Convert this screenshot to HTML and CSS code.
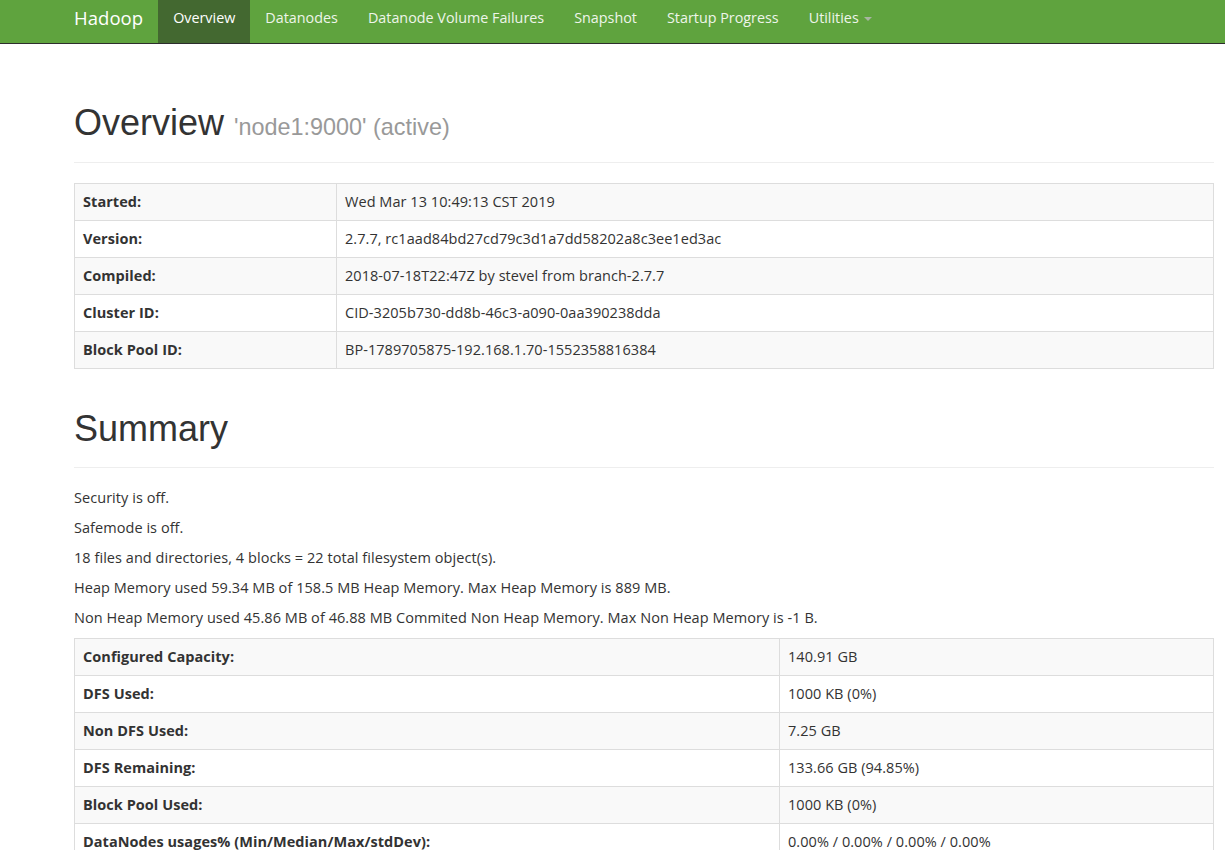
FILE: index.html
```html
<!DOCTYPE html>
<html>
<head>
<meta charset="utf-8">
<title>Namenode information</title>
<link rel="stylesheet" href="styles.css">
</head>
<body>
<header class="navbar">
  <div class="navbar-inner">
    <a class="brand" href="#">Hadoop</a>
    <ul class="nav">
      <li class="active"><a href="#">Overview</a></li>
      <li><a href="#">Datanodes</a></li>
      <li><a href="#">Datanode Volume Failures</a></li>
      <li><a href="#">Snapshot</a></li>
      <li><a href="#">Startup Progress</a></li>
      <li><a href="#">Utilities <span class="caret"></span></a></li>
    </ul>
  </div>
</header>
<main class="container">
  <div class="page-header first">
    <h1>Overview <small>'node1:9000' (active)</small></h1>
  </div>
  <table class="table info">
    <tbody>
      <tr><th>Started:</th><td>Wed Mar 13 10:49:13 CST 2019</td></tr>
      <tr><th>Version:</th><td>2.7.7, rc1aad84bd27cd79c3d1a7dd58202a8c3ee1ed3ac</td></tr>
      <tr><th>Compiled:</th><td>2018-07-18T22:47Z by stevel from branch-2.7.7</td></tr>
      <tr><th>Cluster ID:</th><td>CID-3205b730-dd8b-46c3-a090-0aa390238dda</td></tr>
      <tr><th>Block Pool ID:</th><td>BP-1789705875-192.168.1.70-1552358816384</td></tr>
    </tbody>
  </table>
  <div class="page-header">
    <h1>Summary</h1>
  </div>
  <p>Security is off.</p>
  <p>Safemode is off.</p>
  <p>18 files and directories, 4 blocks = 22 total filesystem object(s).</p>
  <p>Heap Memory used 59.34 MB of 158.5 MB Heap Memory. Max Heap Memory is 889 MB.</p>
  <p>Non Heap Memory used 45.86 MB of 46.88 MB Commited Non Heap Memory. Max Non Heap Memory is -1 B.</p>
  <table class="table summary">
    <tbody>
      <tr><th>Configured Capacity:</th><td>140.91 GB</td></tr>
      <tr><th>DFS Used:</th><td>1000 KB (0%)</td></tr>
      <tr><th>Non DFS Used:</th><td>7.25 GB</td></tr>
      <tr><th>DFS Remaining:</th><td>133.66 GB (94.85%)</td></tr>
      <tr><th>Block Pool Used:</th><td>1000 KB (0%)</td></tr>
      <tr><th>DataNodes usages% (Min/Median/Max/stdDev):</th><td>0.00% / 0.00% / 0.00% / 0.00%</td></tr>
      <tr><th>Live Nodes</th><td>1 (Decommissioned: 0)</td></tr>
      <tr><th>Dead Nodes</th><td>0 (Decommissioned: 0)</td></tr>
    </tbody>
  </table>
</main>
</body>
</html>
```
FILE: styles.css
```css
* { box-sizing: border-box; }
html, body { overflow-x: hidden; }
body {
  margin: 0;
  font-family: "Open Sans", "Noto Sans CJK SC", sans-serif;
  font-size: 14.5px;
  letter-spacing: 0.05px;
  line-height: 20px;
  color: #333;
  background: #fff;
}
a { text-decoration: none; }

.navbar {
  background: #5fa33e;
  border-bottom: 1px solid #2d2d2d;
  margin-bottom: 19px;
}
.navbar-inner {
  margin-left: 59px;
  display: flex;
  align-items: flex-start;
}
.brand {
  display: block;
  padding: 8px 15px 15px;
  font-size: 18.5px;
  line-height: 20px;
  color: #fff;
}
.nav {
  display: flex;
  list-style: none;
  margin: 0;
  padding: 0;
}
.nav a {
  display: block;
  padding: 8px 15px 15px;
  font-size: 14.35px;
  letter-spacing: 0;
  color: #eef5ea;
}
.nav .active a {
  background: #436830;
  color: #fff;
}
.caret {
  display: inline-block;
  width: 0;
  height: 0;
  margin-left: 2px;
  vertical-align: middle;
  border-top: 4px solid #a8b5a2;
  border-left: 4px solid transparent;
  border-right: 4px solid transparent;
}

.container {
  display: flow-root;
  margin-left: 59px;
  width: 1155px;
  padding-left: 15px;
}
.page-header {
  margin: 40px 0 20px;
  padding-bottom: 9px;
  border-bottom: 1px solid #eee;
}
h1 {
  margin: 0 0 10px;
  font-family: "Liberation Sans", Arial, sans-serif;
  font-weight: 500;
  font-size: 36px;
  line-height: 1.1;
  letter-spacing: 0;
  color: #333;
}
h1 small {
  font-size: 65%;
  font-weight: normal;
  color: #999;
}
p { margin: 0 0 10px; }

.table {
  width: 1140px;
  border-collapse: collapse;
  border: 1px solid #ddd;
  margin-bottom: 20px;
}
.table th, .table td {
  padding: 8px;
  line-height: 20px;
  border: 1px solid #ddd;
  text-align: left;
  vertical-align: top;
}
.table th { font-weight: bold; }
.table tr:nth-child(odd) { background: #f9f9f9; }
.info th { width: 262px; }
.summary th { width: 705px; }
```
